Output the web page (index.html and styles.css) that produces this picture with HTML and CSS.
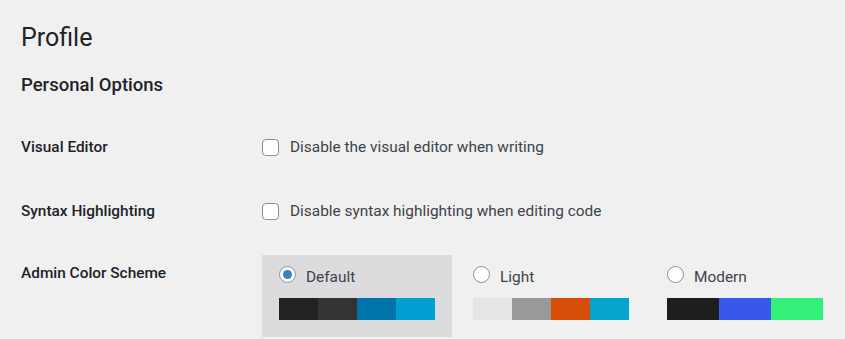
FILE: index.html
```html
<!DOCTYPE html>
<html lang="en">
<head>
    <meta charset="UTF-8">
    <meta name="viewport" content="width=device-width, initial-scale=1.0">
    <title>Profile</title>
    <link rel="stylesheet" href="styles.css">
</head>
<body>
<div class="wrap">
    <h1>Profile</h1>
    <h2>Personal Options</h2>

    <div class="form-table">
        <div class="row">
            <div class="th">Visual Editor</div>
            <div class="td">
                <label class="check">
                    <span class="checkbox"></span>
                    Disable the visual editor when writing
                </label>
            </div>
        </div>

        <div class="row">
            <div class="th">Syntax Highlighting</div>
            <div class="td">
                <label class="check">
                    <span class="checkbox"></span>
                    Disable syntax highlighting when editing code
                </label>
            </div>
        </div>

        <div class="row row-colors">
            <div class="th">Admin Color Scheme</div>
            <div class="td color-picker">
                <div class="color-option selected">
                    <div class="option-label">
                        <span class="radio checked"></span>
                        <span class="option-name">Default</span>
                    </div>
                    <div class="palette">
                        <span style="background:#222222"></span>
                        <span style="background:#333333"></span>
                        <span style="background:#0073aa"></span>
                        <span style="background:#00a0d2"></span>
                    </div>
                </div>
                <div class="color-option">
                    <div class="option-label">
                        <span class="radio"></span>
                        <span class="option-name">Light</span>
                    </div>
                    <div class="palette">
                        <span style="background:#e5e5e5"></span>
                        <span style="background:#999999"></span>
                        <span style="background:#d64e07"></span>
                        <span style="background:#04a4cc"></span>
                    </div>
                </div>
                <div class="color-option">
                    <div class="option-label">
                        <span class="radio"></span>
                        <span class="option-name">Modern</span>
                    </div>
                    <div class="palette">
                        <span style="background:#1e1e1e"></span>
                        <span style="background:#3858e9"></span>
                        <span style="background:#33f078"></span>
                    </div>
                </div>
            </div>
        </div>
    </div>
</div>
</body>
</html>
```

FILE: styles.css
```css
:root {
    --bg: #f0f0f1;
    --text-dark: #1d2327;
    --text: #3c434a;
    --border: #8c8f94;
    --selected: #dcdcde;
    --accent: #3582c4;
}
body {
    margin: 0;
    background-color: var(--bg);
    color: var(--text);
    font-family: Roboto, "Noto Sans", sans-serif;
    font-size: 15.4px;
    line-height: 21px;
}
.wrap {
    padding: 22px 0 0 21px;
}
h1 {
    margin: 0;
    font-size: 25px;
    font-weight: 400;
    line-height: 32px;
    color: var(--text-dark);
}
h2 {
    margin: 18px 0 0;
    font-size: 18.5px;
    font-weight: 500;
    line-height: 26px;
    color: var(--text-dark);
}
.form-table {
    margin-top: 39px;
}
.row {
    display: flex;
    align-items: flex-start;
}
.row + .row {
    margin-top: 43px;
}
.row-colors {
    margin-top: 33px !important;
}
.th {
    width: 241px;
    flex-shrink: 0;
    font-weight: 500;
    color: var(--text-dark);
}
.row-colors .th {
    padding-top: 8px;
}
.check {
    display: flex;
    align-items: center;
    gap: 11px;
}
.checkbox {
    width: 17px;
    height: 17px;
    box-sizing: border-box;
    border: 1px solid var(--border);
    border-radius: 4px;
    background: #fff;
}
.color-picker {
    display: flex;
    gap: 4px;
}
.color-option {
    width: 190px;
    box-sizing: border-box;
    padding: 11px 17px 17px;
}
.color-option.selected {
    background-color: var(--selected);
}
.option-label {
    display: flex;
    align-items: flex-start;
    gap: 10px;
}
.option-name {
    padding-top: 1px;
}
.radio {
    width: 17px;
    height: 17px;
    box-sizing: border-box;
    border: 1px solid var(--border);
    border-radius: 50%;
    background: #fff;
    display: flex;
    align-items: center;
    justify-content: center;
}
.radio.checked::before {
    content: "";
    width: 9px;
    height: 9px;
    border-radius: 50%;
    background-color: var(--accent);
}
.palette {
    display: flex;
    margin-top: 10px;
    height: 22px;
}
.palette span {
    flex: 1;
}
```
